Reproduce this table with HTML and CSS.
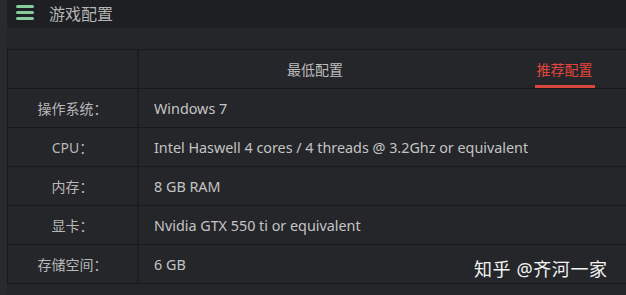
FILE: index.html
```html
<!DOCTYPE html>
<html lang="zh-CN">
<head>
    <meta charset="UTF-8">
    <title>游戏配置</title>
    <link rel="stylesheet" href="styles.css">
</head>
<body>

<div class="page">
    <div class="topbar">
        <svg class="menu-icon" width="18" height="18" viewBox="0 0 18 18">
            <rect x="0" y="2" width="18" height="3" rx="1.5" fill="#86cc9c"/>
            <rect x="0" y="8" width="18" height="3" rx="1.5" fill="#86cc9c"/>
            <rect x="0" y="14" width="18" height="3" rx="1.5" fill="#86cc9c"/>
        </svg>
        <span class="topbar-title">游戏配置</span>
    </div>

    <div class="specs">
        <div class="row head">
            <div class="label"></div>
            <div class="tabs">
                <div class="tab">最低配置</div>
                <div class="tab active"><span>推荐配置</span></div>
            </div>
        </div>
        <div class="row">
            <div class="label">操作系统：</div>
            <div class="value">Windows 7</div>
        </div>
        <div class="row">
            <div class="label">CPU：</div>
            <div class="value">Intel Haswell 4 cores / 4 threads @ 3.2Ghz or equivalent</div>
        </div>
        <div class="row">
            <div class="label">内存：</div>
            <div class="value">8 GB RAM</div>
        </div>
        <div class="row">
            <div class="label">显卡：</div>
            <div class="value">Nvidia GTX 550 ti or equivalent</div>
        </div>
        <div class="row">
            <div class="label">存储空间：</div>
            <div class="value">6 GB</div>
        </div>
    </div>

    <div class="watermark">知乎 @齐河一家</div>
</div>

</body>
</html>
```

FILE: styles.css
```css
body {
    margin: 0;
    background: #292a2e;
    font-family: 'Noto Sans', 'Noto Sans CJK SC', sans-serif;
    overflow: hidden;
}
.page {
    position: relative;
    margin-left: 7px;
    height: 295px;
    background: #25262a;
    overflow: hidden;
}
.topbar {
    display: flex;
    align-items: center;
    height: 28px;
    background: #1e1f23;
    padding-left: 9px;
}
.menu-icon {
    margin-top: -4px;
}
.topbar-title {
    margin-left: 15px;
    margin-top: -3px;
    font-size: 16px;
    color: #b4b4b4;
}
.specs {
    margin-top: 21px;
    border-top: 1px solid #18191c;
    border-bottom: 1px solid #18191c;
    border-left: 1px solid #18191c;
}
.row {
    display: flex;
    height: 38px;
    border-bottom: 1px solid #18191c;
}
.row:last-child {
    border-bottom: none;
}
.label {
    width: 129px;
    flex: none;
    border-right: 2px solid #1c1d20;
    display: flex;
    align-items: center;
    justify-content: center;
    font-size: 14px;
    color: #b8b8b8;
}
.value {
    padding-left: 15px;
    display: flex;
    align-items: center;
    font-size: 14.35px;
    color: #c4c4c4;
    white-space: nowrap;
}
.tabs {
    display: flex;
    flex: 1;
}
.tab {
    display: flex;
    align-items: center;
    justify-content: center;
    font-size: 14px;
    color: #bdbdbd;
}
.tab:first-child {
    width: 352px;
}
.tab.active {
    flex: 1;
    padding-left: 12px;
    color: #e2453b;
}
.tab.active span {
    position: relative;
    align-self: stretch;
    display: flex;
    align-items: center;
    padding: 0 2px;
}
.tab.active span::after {
    content: '';
    position: absolute;
    left: 0;
    right: 0;
    bottom: 0;
    height: 3px;
    background: #d9463b;
}
.watermark {
    position: absolute;
    left: 467px;
    top: 255px;
    font-size: 18px;
    letter-spacing: 0.6px;
    color: #f2f2f2;
}
```
